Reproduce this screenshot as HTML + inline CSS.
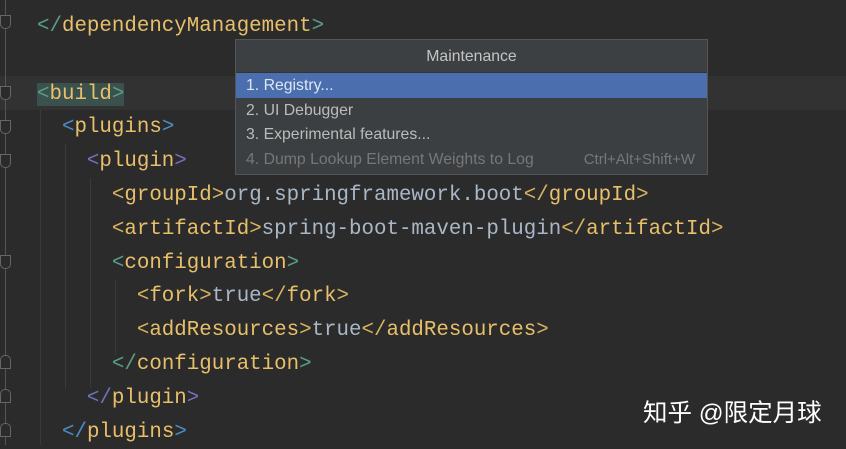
<!DOCTYPE html>
<html><head><style>
body{margin:0;width:846px;height:445px;background:#2b2b2b;overflow:hidden;position:relative;font-family:"Liberation Mono",monospace;}
.band{position:absolute;left:0;top:76px;width:846px;height:34px;background:#323232}
.code{position:absolute;left:37px;top:10px;font-size:20.8px;line-height:33.8px;color:#a9b7c6;white-space:pre}
.t{color:#e8bf6a}.g{color:#5a9e88}.b{color:#4a8dc9}.p{color:#7171c0}.y{color:#d8b25e}
.hl{background:#3b514d}
.gl{position:absolute;left:5px;top:0;width:1px;height:445px;background:#555}
.fm{position:absolute;left:0;width:9px;height:12px;border:1px solid #666;border-radius:0 0 5px 5px;background:#2b2b2b}
.guide{position:absolute;width:1px;background:#3a3a3a}
.pop{position:absolute;left:235px;top:39px;width:471px;height:134px;background:#3c3f41;border:1px solid #555;font-family:"Liberation Sans",sans-serif;font-size:15.8px;color:#bbbbbb}
.hd{height:32px;line-height:33px;text-align:center;color:#c4c4c4;background:#3d4042;border-bottom:1px solid #333}
.it{height:24.5px;line-height:25px;padding-left:10px;position:relative}
.sel{background:#4b6eaf;color:#dfe6f0}
.dis{color:#777}
.sc{position:absolute;right:12px;top:0;color:#777;font-size:15px}
.wm{position:absolute;left:643px;top:394px;font-family:"Liberation Sans","Noto Sans CJK SC",sans-serif;font-size:24.5px;color:#fff}
</style></head><body>
<div class="band"></div>
<div class="gl"></div>
<div class="fm" style="top:15px"></div>
<div class="fm" style="top:86px"></div>
<div class="fm" style="top:120px"></div>
<div class="fm" style="top:154px"></div>
<div class="fm" style="top:255px"></div>
<div class="fm" style="top:355px;border-radius:5px 5px 0 0"></div>
<div class="fm" style="top:389px;border-radius:5px 5px 0 0"></div>
<div class="fm" style="top:423px;border-radius:5px 5px 0 0"></div>
<div class="guide" style="left:40px;top:110px;height:335px"></div>
<div class="guide" style="left:65px;top:144px;height:245px"></div>
<div class="guide" style="left:90px;top:178px;height:210px"></div>
<div class="guide" style="left:115px;top:280px;height:75px"></div>
<div class="code"><span class="g">&lt;/</span><span class="t">dependencyManagement</span><span class="g">&gt;</span>

<span class="hl"><span class="g">&lt;</span><span class="t">build</span><span class="g">&gt;</span></span>
  <span class="b">&lt;</span><span class="t">plugins</span><span class="b">&gt;</span>
    <span class="p">&lt;</span><span class="t">plugin</span><span class="p">&gt;</span>
      <span class="y">&lt;</span><span class="t">groupId</span><span class="y">&gt;</span>org.springframework.boot<span class="y">&lt;/</span><span class="t">groupId</span><span class="y">&gt;</span>
      <span class="y">&lt;</span><span class="t">artifactId</span><span class="y">&gt;</span>spring-boot-maven-plugin<span class="y">&lt;/</span><span class="t">artifactId</span><span class="y">&gt;</span>
      <span class="g">&lt;</span><span class="t">configuration</span><span class="g">&gt;</span>
        <span class="y">&lt;</span><span class="t">fork</span><span class="y">&gt;</span>true<span class="y">&lt;/</span><span class="t">fork</span><span class="y">&gt;</span>
        <span class="y">&lt;</span><span class="t">addResources</span><span class="y">&gt;</span>true<span class="y">&lt;/</span><span class="t">addResources</span><span class="y">&gt;</span>
      <span class="g">&lt;/</span><span class="t">configuration</span><span class="g">&gt;</span>
    <span class="p">&lt;/</span><span class="t">plugin</span><span class="p">&gt;</span>
  <span class="b">&lt;/</span><span class="t">plugins</span><span class="b">&gt;</span></div>
<div class="pop">
<div class="hd">Maintenance</div>
<div class="it sel">1. Registry...</div>
<div class="it">2. UI Debugger</div>
<div class="it">3. Experimental features...</div>
<div class="it dis">4. Dump Lookup Element Weights to Log<span class="sc">Ctrl+Alt+Shift+W</span></div>
</div>
<div class="wm">知乎 @限定月球</div>
</body></html>
